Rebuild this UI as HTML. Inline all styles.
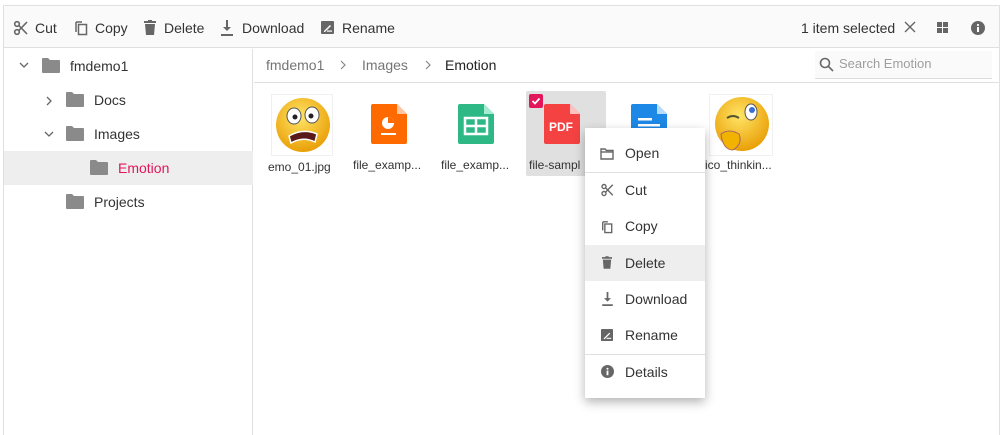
<!DOCTYPE html>
<html><head><meta charset="utf-8"><style>
*{box-sizing:border-box;margin:0;padding:0}
html,body{width:1003px;height:435px;overflow:hidden}
body{background:#fff;font-family:"Liberation Sans",Arial,sans-serif;color:#333;position:relative}
.abs{position:absolute}
.frame{left:3px;top:5px;width:997px;height:430px;border:1px solid #e0e0e0;border-bottom:none}
.tb{left:4px;top:6px;width:995px;height:42px;background:#fafafa;border-bottom:1px solid #e0e0e0}
.t{position:absolute;font-size:14px;white-space:nowrap}
.tree{left:4px;top:49px;width:249px;height:386px;border-right:1px solid #e0e0e0}
.bc{left:254px;top:49px;width:745px;height:34px;border-bottom:1px solid #e0e0e0}
svg{position:absolute}
.fn{position:absolute;font-size:12px;color:#333;white-space:nowrap}
.menu{left:585px;top:128px;width:120px;height:270px;background:#fff;box-shadow:0 4px 10px rgba(0,0,0,.3)}
.mi{position:absolute;left:40px;font-size:14px;color:#333}
</style></head><body>
<div class="abs frame"></div>
<div class="abs tb"></div>
<svg style="left:13px;top:20px" width="16" height="16" viewBox="0 0 16 16" fill="none" stroke="#666" stroke-width="1.6"><circle cx="4" cy="4" r="2.3"/><circle cx="4" cy="12" r="2.3"/><path d="M5.8 5.5L14 14M5.8 10.5L14 2"/></svg>
<div class="t" style="left:35px;top:20px">Cut</div>
<svg style="left:74px;top:20px" width="14" height="16" viewBox="0 0 14 16" fill="none" stroke="#666" stroke-width="1.5"><path d="M2 2v10M2 2h6"/><rect x="4.5" y="4.5" width="8" height="10"/></svg>
<div class="t" style="left:95px;top:20px">Copy</div>
<svg style="left:144px;top:20px" width="12" height="15" viewBox="0 0 12 15" fill="#666"><rect x="0" y="1" width="12" height="2"/><rect x="4" y="0" width="4" height="2"/><path d="M1 4h10l-1 11H2z"/></svg>
<div class="t" style="left:164px;top:20px">Delete</div>
<svg style="left:221px;top:20px" width="12" height="16" viewBox="0 0 12 16" fill="#666"><path d="M5 0h2v7h3l-4 4-4-4h3z"/><rect x="0" y="14" width="12" height="2"/></svg>
<div class="t" style="left:242px;top:20px">Download</div>
<svg style="left:321px;top:21px" width="13" height="13" viewBox="0 0 13 13"><rect width="13" height="13" fill="#666" rx="1"/><path d="M3 10L9 4l1 1-6 6H3z" fill="#fff"/><rect x="6" y="9.5" width="5" height="1.2" fill="#fff"/></svg>
<div class="t" style="left:342px;top:20px">Rename</div>
<div class="t" style="left:801px;top:20px">1 item selected</div>
<svg style="left:904px;top:21px" width="12" height="12" viewBox="0 0 12 12" stroke="#666" stroke-width="1.4"><path d="M1 1l10 10M11 1L1 11"/></svg>
<svg style="left:937px;top:22px" width="11" height="11" viewBox="0 0 11 11" fill="#666"><rect width="5" height="5"/><rect x="6" width="5" height="5"/><rect y="6" width="5" height="5"/><rect x="6" y="6" width="5" height="5"/></svg>
<svg style="left:971px;top:21px" width="14" height="14" viewBox="0 0 14 14"><circle cx="7" cy="7" r="7" fill="#666"/><rect x="6" y="6" width="2" height="5" fill="#fff"/><circle cx="7" cy="4" r="1.1" fill="#fff"/></svg>
<div class="abs tree"></div>
<div class="abs" style="left:4px;top:151px;width:249px;height:34px;background:#eee"></div>
<svg style="left:19px;top:62px" width="10" height="6" viewBox="0 0 10 6" fill="none" stroke="#666" stroke-width="1.3"><path d="M1 1l4 4 4-4"/></svg>
<svg style="left:46px;top:96px" width="6" height="10" viewBox="0 0 6 10" fill="none" stroke="#666" stroke-width="1.3"><path d="M1 1l4 4-4 4"/></svg>
<svg style="left:44px;top:131px" width="10" height="6" viewBox="0 0 10 6" fill="none" stroke="#666" stroke-width="1.3"><path d="M1 1l4 4 4-4"/></svg>
<svg style="left:42px;top:58px" width="18" height="15" viewBox="0 0 18 15" fill="#8a8a8a"><path d="M0 1q0-1 1-1h5l2 2h9q1 0 1 1v11q0 1-1 1H1q-1 0-1-1z"/></svg>
<svg style="left:66px;top:92px" width="18" height="15" viewBox="0 0 18 15" fill="#8a8a8a"><path d="M0 1q0-1 1-1h5l2 2h9q1 0 1 1v11q0 1-1 1H1q-1 0-1-1z"/></svg>
<svg style="left:66px;top:126px" width="18" height="15" viewBox="0 0 18 15" fill="#8a8a8a"><path d="M0 1q0-1 1-1h5l2 2h9q1 0 1 1v11q0 1-1 1H1q-1 0-1-1z"/></svg>
<svg style="left:90px;top:160px" width="18" height="15" viewBox="0 0 18 15" fill="#8a8a8a"><path d="M0 1q0-1 1-1h5l2 2h9q1 0 1 1v11q0 1-1 1H1q-1 0-1-1z"/></svg>
<svg style="left:66px;top:194px" width="18" height="15" viewBox="0 0 18 15" fill="#8a8a8a"><path d="M0 1q0-1 1-1h5l2 2h9q1 0 1 1v11q0 1-1 1H1q-1 0-1-1z"/></svg>
<div class="t" style="left:70px;top:58px">fmdemo1</div>
<div class="t" style="left:94px;top:92px">Docs</div>
<div class="t" style="left:94px;top:126px">Images</div>
<div class="t" style="left:118px;top:160px;color:#e3165b">Emotion</div>
<div class="t" style="left:94px;top:194px">Projects</div>
<div class="abs bc"></div>
<div class="t" style="left:266px;top:57px;color:#757575">fmdemo1</div>
<svg style="left:340px;top:60px" width="6" height="10" viewBox="0 0 6 10" fill="none" stroke="#888" stroke-width="1.2"><path d="M1 1l4 4-4 4"/></svg>
<div class="t" style="left:362px;top:57px;color:#757575">Images</div>
<svg style="left:425px;top:60px" width="6" height="10" viewBox="0 0 6 10" fill="none" stroke="#888" stroke-width="1.2"><path d="M1 1l4 4-4 4"/></svg>
<div class="t" style="left:445px;top:57px;color:#222">Emotion</div>
<div class="abs" style="left:815px;top:51px;width:177px;height:28px;background:#fafafa;border-bottom:1px solid #ddd"></div>
<svg style="left:819px;top:57px" width="15" height="15" viewBox="0 0 15 15" fill="none" stroke="#666" stroke-width="1.6"><circle cx="6" cy="6" r="4.5"/><path d="M9.3 9.3L14 14"/></svg>
<div class="t" style="left:839px;top:56px;color:#9e9e9e;font-size:13px">Search Emotion</div>
<div class="abs" style="left:271px;top:94px;width:62px;height:62px;background:#fff;border:1px solid #f0f0f0"></div>
<svg style="left:274px;top:96px" width="58" height="58" viewBox="0 0 58 58"><defs><radialGradient id="g1" cx=".45" cy=".35" r=".7"><stop offset="0" stop-color="#ffe566"/><stop offset="1" stop-color="#e89a00"/></radialGradient></defs><circle cx="29" cy="29" r="27" fill="url(#g1)"/><ellipse cx="20" cy="20" rx="7" ry="8" fill="#fff" stroke="#555"/><ellipse cx="38" cy="19" rx="7" ry="8" fill="#fff" stroke="#555"/><circle cx="21" cy="21" r="2.5" fill="#222"/><circle cx="37" cy="20" r="2.5" fill="#222"/><path d="M15 40q14-8 28-2l-2 8q-12-6-24 1z" fill="#5a1a1a" stroke="#fff" stroke-width="1.5"/></svg>
<div class="fn" style="left:268px;top:160px">emo_01.jpg</div>
<svg style="left:371px;top:104px" width="36" height="40" viewBox="0 0 36 40"><path d="M2 0h24l10 10v28q0 2-2 2H2q-2 0-2-2V2q0-2 2-2z" fill="#ff6a00"/><path d="M26 0l10 10H26z" fill="#ffc4a0"/><circle cx="17" cy="19" r="6" fill="#fff"/><path d="M17 19V13a6 6 0 0 1 6 6z" fill="#ff6a00"/><rect x="10" y="29" width="15" height="2" fill="#fff"/></svg>
<div class="fn" style="left:353px;top:158px">file_examp...</div>
<svg style="left:458px;top:104px" width="36" height="40" viewBox="0 0 36 40"><path d="M2 0h24l10 10v28q0 2-2 2H2q-2 0-2-2V2q0-2 2-2z" fill="#2db886"/><path d="M26 0l10 10H26z" fill="#a6ecd2"/><rect x="7" y="14" width="22" height="16" fill="none" stroke="#fff" stroke-width="2.5"/><path d="M7 22h22M18 14v16" stroke="#fff" stroke-width="2.5"/></svg>
<div class="fn" style="left:441px;top:158px">file_examp...</div>
<div class="abs" style="left:526px;top:91px;width:80px;height:85px;background:#e0e0e0;border-radius:2px"></div>
<div class="abs" style="left:529px;top:94px;width:14px;height:14px;background:#e3165b;border-radius:2px"></div>
<svg style="left:531px;top:96px" width="10" height="10" viewBox="0 0 10 10" fill="none" stroke="#fff" stroke-width="1.8"><path d="M1.5 5l2.5 2.5 4.5-5"/></svg>
<svg style="left:544px;top:104px" width="36" height="40" viewBox="0 0 36 40"><path d="M2 0h24l10 10v28q0 2-2 2H2q-2 0-2-2V2q0-2 2-2z" fill="#f44141"/><path d="M26 0l10 10H26z" fill="#ffc0c0"/><text x="17" y="27" font-family="Liberation Sans" font-weight="bold" font-size="12" fill="#fff" text-anchor="middle">PDF</text></svg>
<div class="fn" style="left:529px;top:158px">file-sampl</div>
<svg style="left:631px;top:104px" width="36" height="40" viewBox="0 0 36 40"><path d="M2 0h24l10 10v28q0 2-2 2H2q-2 0-2-2V2q0-2 2-2z" fill="#1d88e5"/><path d="M26 0l10 10H26z" fill="#b3dcff"/><rect x="7" y="14" width="14" height="2.5" fill="#fff"/><rect x="7" y="20" width="22" height="2.5" fill="#fff"/></svg>
<div class="abs" style="left:709px;top:94px;width:64px;height:62px;background:#fff;border:1px solid #f0f0f0"></div>
<svg style="left:711px;top:96px" width="60" height="58" viewBox="0 0 60 58"><defs><radialGradient id="g2" cx=".45" cy=".35" r=".7"><stop offset="0" stop-color="#ffe566"/><stop offset="1" stop-color="#e89a00"/></radialGradient></defs><circle cx="31" cy="28" r="27" fill="url(#g2)"/><ellipse cx="40" cy="16" rx="6" ry="8" fill="#fff" stroke="#555"/><circle cx="41" cy="14" r="3" fill="#3a6fd0"/><path d="M16 22q6-4 12 0" stroke="#553" stroke-width="2" fill="none"/><path d="M10 38q8-6 18 0q4 10-6 16q-10 0-12-16z" fill="#f2b300" stroke="#a66" stroke-width="1"/></svg>
<div class="fn" style="left:705px;top:158px">ico_thinkin...</div>
<div class="abs menu">
 <div class="abs" style="left:0;top:44px;width:120px;height:1px;background:#e0e0e0"></div>
 <div class="abs" style="left:0;top:117px;width:120px;height:36px;background:#eee"></div>
 <div class="abs" style="left:0;top:226px;width:120px;height:1px;background:#e0e0e0"></div>
 <svg style="left:15px;top:20px" width="14" height="12" viewBox="0 0 14 12" fill="none" stroke="#666" stroke-width="1.4"><path d="M1 1h4l1.5 1.5H13V11H1z"/><path d="M1 4h12"/></svg>
 <div class="mi" style="top:17px">Open</div>
 <svg style="left:15px;top:55px" width="15" height="14" viewBox="0 0 16 16" fill="none" stroke="#666" stroke-width="1.6"><circle cx="4" cy="4" r="2.3"/><circle cx="4" cy="12" r="2.3"/><path d="M5.8 5.5L14 14M5.8 10.5L14 2"/></svg>
 <div class="mi" style="top:54px">Cut</div>
 <svg style="left:16px;top:92px" width="12" height="14" viewBox="0 0 14 16" fill="none" stroke="#666" stroke-width="1.6"><path d="M2 2v10M2 2h6"/><rect x="4.5" y="4.5" width="8" height="10"/></svg>
 <div class="mi" style="top:90px">Copy</div>
 <svg style="left:17px;top:128px" width="10" height="13" viewBox="0 0 12 15" fill="#666"><rect x="0" y="1" width="12" height="2"/><rect x="4" y="0" width="4" height="2"/><path d="M1 4h10l-1 11H2z"/></svg>
 <div class="mi" style="top:127px">Delete</div>
 <svg style="left:17px;top:164px" width="11" height="14" viewBox="0 0 12 16" fill="#666"><path d="M5 0h2v7h3l-4 4-4-4h3z"/><rect x="0" y="14" width="12" height="2"/></svg>
 <div class="mi" style="top:163px">Download</div>
 <svg style="left:16px;top:201px" width="12" height="12" viewBox="0 0 13 13"><rect width="13" height="13" fill="#666" rx="1"/><path d="M3 10L9 4l1 1-6 6H3z" fill="#fff"/><rect x="6" y="9.5" width="5" height="1.2" fill="#fff"/></svg>
 <div class="mi" style="top:199px">Rename</div>
 <svg style="left:16px;top:237px" width="13" height="13" viewBox="0 0 14 14"><circle cx="7" cy="7" r="7" fill="#666"/><rect x="6" y="6" width="2" height="5" fill="#fff"/><circle cx="7" cy="4" r="1.1" fill="#fff"/></svg>
 <div class="mi" style="top:236px">Details</div>
</div>
</body></html>
